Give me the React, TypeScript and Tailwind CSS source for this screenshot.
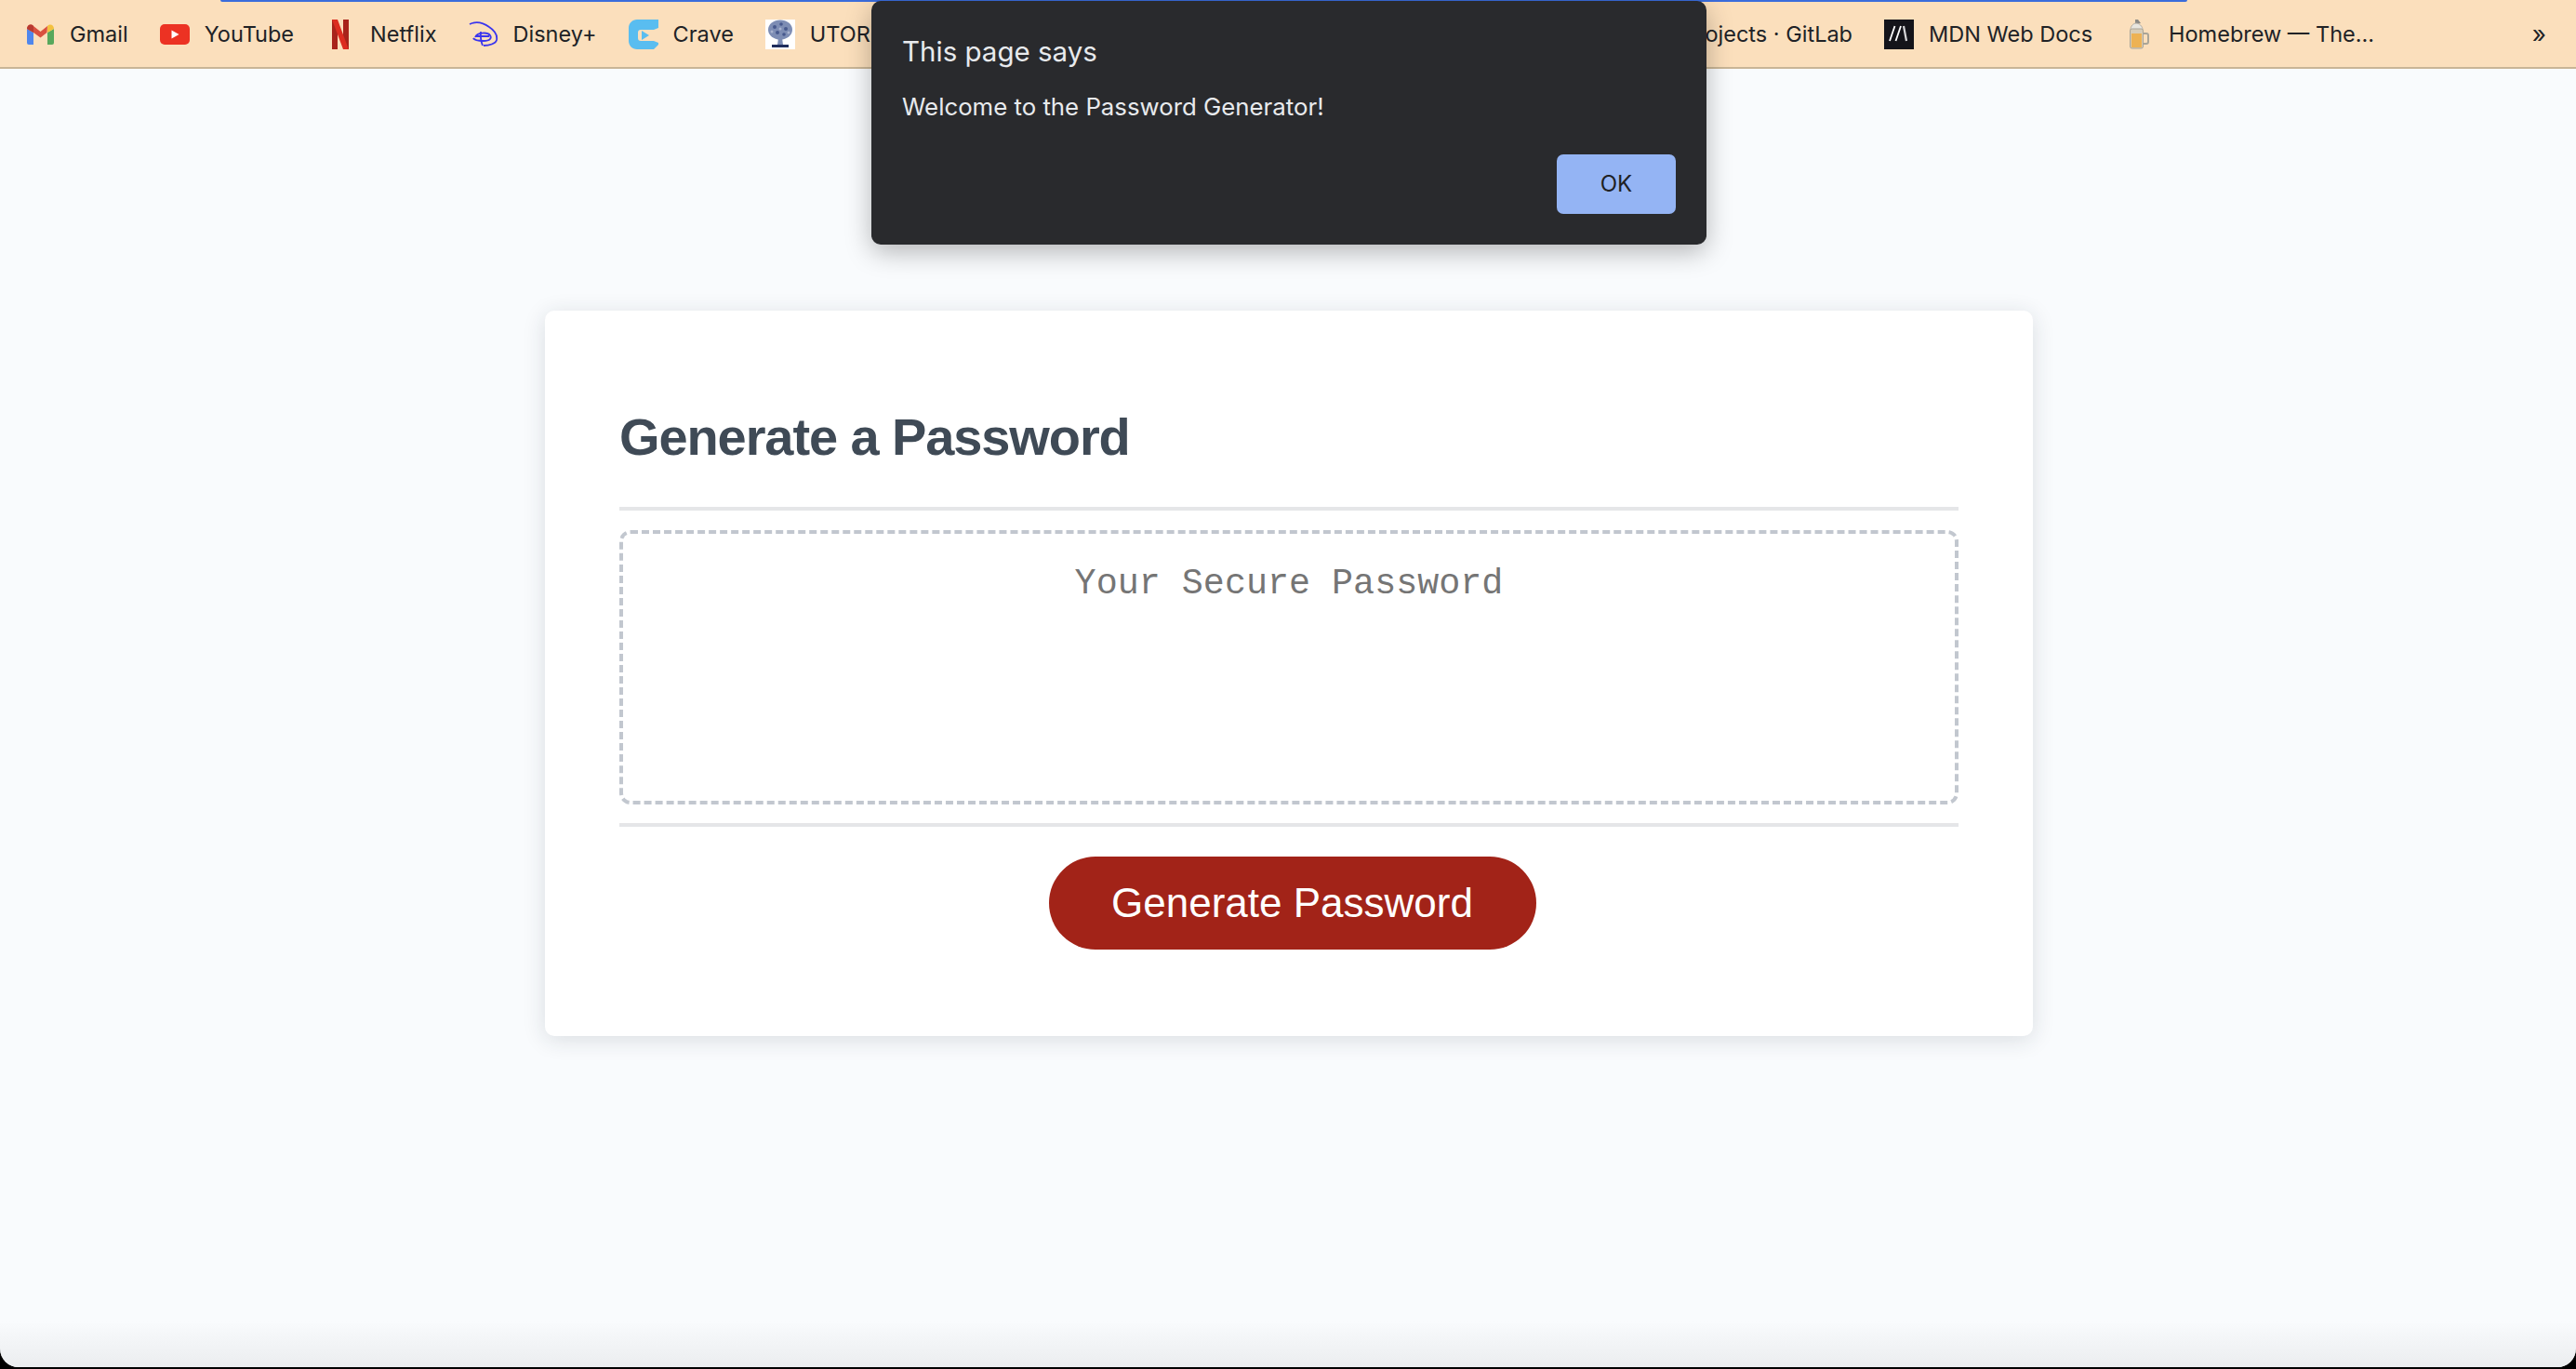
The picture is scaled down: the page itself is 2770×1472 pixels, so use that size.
import React from 'react';

function GmailIcon() {
  return (
    <svg width="29" height="22" viewBox="0 0 29 22">
      <path d="M0 5v15a2 2 0 0 0 2 2h5V9z" fill="#4f86ec" />
      <path d="M22 9v13h5a2 2 0 0 0 2-2V5z" fill="#58a85c" />
      <path d="M0 5c0-4 4-6 7-3l7.500 6L22 2l-.5 7-7 5.500L7 9 0 5z" fill="#d9503f" />
      <path d="M22 2c3-3 7-1 7 3l-7 4z" fill="#f3c13f" />
      <path d="M0 5c0-4 4-6 7-3v7z" fill="#b83a30" />
    </svg>
  );
}

function YouTubeIcon() {
  return (
    <svg width="32" height="22" viewBox="0 0 32 22">
      <rect width="32" height="22" rx="5" fill="#ec3223" />
      <path d="M12.500 6.500v9l8-4.500z" fill="#fff" />
    </svg>
  );
}

function NetflixIcon() {
  return (
    <svg width="18" height="32" viewBox="0 0 18 32">
      <path d="M0 0h6v32l-6 .5z" fill="#a8231b" />
      <path d="M12 0h6v32.500l-6-.5z" fill="#a8231b" />
      <path d="M0 0h6l12 32.500-6-.5z" fill="#dc2c20" />
    </svg>
  );
}

function DisneyIcon() {
  return (
    <svg width="32" height="28" viewBox="0 0 32 28" fill="none" stroke="#3a35ee" strokeWidth="1.800">
      <path d="M1 3c6-3 14-2 21 3 6 4 9 9 8 14-1 4-8 6-14 6" />
      <path d="M7 17c2-5 13-6 16-2 2 3 0 6-7 6-5 0-10-1-11-3" />
      <path d="M13 11c-.5 5 0 10 2 15M8 16h14" />
    </svg>
  );
}

function CraveIcon() {
  return (
    <svg width="32" height="32" viewBox="0 0 32 32">
      <path d="M9 0H32V9L27 11H13a3 3 0 0 0-3 3v6a3 3 0 0 0 3 3h14l5 2v2l-5 5H9c-5 0-9-4-9-9V9c0-5 4-9 9-9z" fill="#59bdf0" />
      <path d="M14 12v10l8-5z" fill="#59bdf0" />
    </svg>
  );
}

function UtorIcon() {
  return (
    <svg width="32" height="32" viewBox="0 0 32 32">
      <rect width="32" height="32" fill="#fff" />
      <ellipse cx="16" cy="11" rx="13" ry="10.500" fill="#7d8db4" />
      <circle cx="10" cy="8" r="2" fill="#47598d" />
      <circle cx="17" cy="5" r="1.800" fill="#47598d" />
      <circle cx="22" cy="10" r="2" fill="#47598d" />
      <circle cx="13" cy="14" r="2" fill="#47598d" />
      <circle cx="20" cy="16" r="1.800" fill="#47598d" />
      <circle cx="7" cy="13" r="1.500" fill="#a9b4cf" />
      <circle cx="16" cy="10" r="1.500" fill="#a9b4cf" />
      <circle cx="25" cy="14" r="1.500" fill="#a9b4cf" />
      <path d="M14 20h4l1 7h-6z" fill="#7d8db4" />
      <rect x="7" y="27" width="18" height="3" fill="#1f2d5c" />
    </svg>
  );
}

function MdnIcon() {
  return (
    <svg width="32" height="32" viewBox="0 0 32 32">
      <rect width="32" height="32" fill="#14141a" />
      <path d="M6 23 11.500 7M12.500 23 18 7" stroke="#fff" strokeWidth="1.800" />
      <path d="M21 7 24 23" stroke="#d6d6d8" strokeWidth="2.200" />
    </svg>
  );
}

function HomebrewIcon() {
  return (
    <svg width="22" height="32" viewBox="0 0 22 32">
      <path d="M7 0h3l3 4-6 1z" fill="#8b8a86" />
      <path d="M2 11c0-4 3-7 6-7s7 3 7 7z" fill="#e8e6e0" stroke="#b5b0a6" />
      <rect x="1.500" y="10" width="14" height="21" rx="2" fill="#d8cdb8" stroke="#aaa598" />
      <rect x="3" y="15" width="11" height="15" fill="#edb254" />
      <path d="M16 15h3a2 2 0 0 1 2 2v7a2 2 0 0 1-2 2h-3" fill="none" stroke="#aaa598" strokeWidth="2" />
    </svg>
  );
}

function Bookmark({ icon, label }: { icon: React.ReactNode; label: string }) {
  return (
    <div className="flex items-center gap-[16px] shrink-0">
      <div className="flex w-[32px] items-center justify-center">{icon}</div>
      <span className="whitespace-nowrap">{label}</span>
    </div>
  );
}

export default function App() {
  return (
    <div className="relative w-full h-[1472px] overflow-hidden bg-black [font-family:Inter,sans-serif]">
      <div className="flex flex-col h-[1470px] rounded-b-[20px] overflow-hidden bg-[#f9fbfd]">
        <div className="relative flex items-center gap-[34px] h-[74px] shrink-0 pl-[27px] pt-[1px] bg-[#fbdfbc] border-b-2 border-[#c9b596] text-[23.500px] text-[#202226]">
          <div className="absolute top-0 left-[237px] w-[2115px] h-[2px] rounded-b-md bg-[#3a6cdc]" />
          <Bookmark icon={<GmailIcon />} label="Gmail" />
          <Bookmark icon={<YouTubeIcon />} label="YouTube" />
          <Bookmark icon={<NetflixIcon />} label="Netflix" />
          <Bookmark icon={<DisneyIcon />} label="Disney+" />
          <Bookmark icon={<CraveIcon />} label="Crave" />
          <Bookmark icon={<UtorIcon />} label="UTORid" />
          <span className="ml-[820px] whitespace-nowrap">Projects · GitLab</span>
          <Bookmark icon={<MdnIcon />} label="MDN Web Docs" />
          <Bookmark icon={<HomebrewIcon />} label="Homebrew — The..." />
          <span className="ml-auto mr-[32px] text-[26px]">»</span>
        </div>

        <main className="flex-1 flex flex-col items-center pl-[2px] pt-[260px] [font-family:'Liberation_Sans',sans-serif]">
          <div className="w-[1600px] h-[780px] px-[80px] rounded-[10px] bg-white shadow-[0_4px_24px_rgba(30,40,60,0.14)]">
            <h1 className="pt-[104px] h-[211px] text-[56px] leading-[64px] font-bold tracking-[-1.100px] text-[#3f4a56]">Generate a Password</h1>
            <div className="h-[4px] bg-[#e5e6e8]" />
            <div className="mt-[21px] h-[295px] pt-[32px] rounded-[12px] border-4 border-dashed border-[#c2c7cf] text-center text-[38.400px] leading-[44px] text-[#757575] [font-family:'Liberation_Mono',monospace]">
              Your Secure Password
            </div>
            <div className="mt-[20px] h-[4px] bg-[#e5e6e8]" />
            <div className="flex justify-center pl-[7px] pt-[32px]">
              <button className="w-[524px] h-[100px] rounded-full bg-[#a22318] text-white text-[44px] leading-none">Generate Password</button>
            </div>
          </div>
        </main>

        <div className="h-[50px] shrink-0 bg-gradient-to-b from-transparent to-[#ebedef]" />
      </div>

      <div className="absolute top-[1px] left-[937px] w-[898px] h-[262px] pt-[35px] px-[33px] rounded-[10px] bg-[#292a2d] text-[#e8eaed] shadow-[0_8px_28px_rgba(0,0,0,0.28)]">
        <p className="text-[29.500px] leading-[38px]">This page says</p>
        <p className="mt-[23px] text-[25.800px] leading-[36px]">Welcome to the Password Generator!</p>
        <div className="flex justify-end mt-[33px]">
          <button className="w-[128px] h-[64px] rounded-[7px] bg-[#94b4f4] text-[#202124] text-[24px]">OK</button>
        </div>
      </div>
    </div>
  );
}
